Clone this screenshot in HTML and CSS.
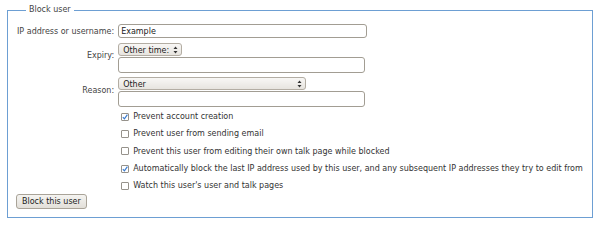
FILE: index.html
```html
<!DOCTYPE html>
<html lang="en">
<head>
    <meta charset="UTF-8">
    <title>Block user</title>
    <link rel="stylesheet" href="styles.css">
</head>
<body>
    <form class="block-form">
        <fieldset class="block-box">
            <legend>Block user</legend>
            <table class="block-table">
                <tr>
                    <td class="label-cell">IP address or username:</td>
                    <td class="input-cell"><input type="text" class="text-input wide" value="Example"></td>
                </tr>
                <tr>
                    <td class="label-cell">Expiry:</td>
                    <td class="input-cell gap-5">
                        <div class="select-box short"><span>Other time:</span><svg class="arrows" width="5" height="8" viewBox="0 0 5 8"><path d="M2.5 0.5L4.5 3H0.5Z M2.5 7.5L4.5 5H0.5Z" fill="#333"/></svg></div>
                        <input type="text" class="text-input">
                    </td>
                </tr>
                <tr>
                    <td class="label-cell">Reason:</td>
                    <td class="input-cell gap-4">
                        <div class="select-box long"><span>Other</span><svg class="arrows" width="5" height="8" viewBox="0 0 5 8"><path d="M2.5 0.5L4.5 3H0.5Z M2.5 7.5L4.5 5H0.5Z" fill="#333"/></svg></div>
                        <input type="text" class="text-input">
                    </td>
                </tr>
                <tr>
                    <td></td>
                    <td class="checks">
                        <label class="check-row"><span class="box"><svg width="6" height="6" viewBox="0 0 6 6"><path d="M0.8 3.2L2.4 4.8L5.4 0.6" fill="none" stroke="#3a7bd0" stroke-width="1.2"/></svg></span>Prevent account creation</label>
                        <label class="check-row"><span class="box"></span>Prevent user from sending email</label>
                        <label class="check-row"><span class="box"></span>Prevent this user from editing their own talk page while blocked</label>
                        <label class="check-row"><span class="box"><svg width="6" height="6" viewBox="0 0 6 6"><path d="M0.8 3.2L2.4 4.8L5.4 0.6" fill="none" stroke="#3a7bd0" stroke-width="1.2"/></svg></span>Automatically block the last IP address used by this user, and any subsequent IP addresses they try to edit from</label>
                        <label class="check-row"><span class="box"></span>Watch this user's user and talk pages</label>
                    </td>
                </tr>
            </table>
            <button type="button" class="submit-btn">Block this user</button>
        </fieldset>
    </form>
</body>
</html>
```

FILE: styles.css
```css
body {
    margin: 0;
    background: #fff;
    font-family: 'DejaVu Sans', sans-serif;
    font-size: 8px;
    color: #333;
}
.block-form {
    padding: 5px 7px 0 7px;
}
.block-box {
    margin: 0;
    border: 1px solid #6d9fd3;
    padding: 9px 8px 8px 9px;
}
.block-box legend {
    padding: 0 3px;
    margin-left: 9px;
    line-height: 10px;
    color: #444;
}
.block-table {
    border-collapse: collapse;
}
.block-table td {
    padding: 0;
}
.label-cell {
    text-align: right;
    vertical-align: middle;
    white-space: nowrap;
    padding-right: 4px !important;
    color: #444;
}
.gap-5 {
    padding-top: 5px !important;
}
.gap-4 {
    padding-top: 4px !important;
}
.text-input {
    display: block;
    width: 247px;
    height: 16px;
    box-sizing: border-box;
    border: 1px solid #a29d93;
    border-radius: 3px;
    font-family: inherit;
    font-size: 8px;
    padding: 0 2px;
    margin: 0;
    color: #222;
}
.text-input.wide {
    width: 249px;
    height: 14px;
}
.select-box {
    display: flex;
    align-items: center;
    justify-content: space-between;
    height: 13px;
    box-sizing: border-box;
    border: 1px solid #b3ada3;
    border-radius: 3px;
    background: linear-gradient(#f8f7f5, #e7e4df);
    padding: 0 3px 0 4px;
    margin-bottom: 1px;
    line-height: 11px;
    color: #222;
}
.select-box span {
    padding-top: 1px;
}
.select-box.short {
    width: 64px;
}
.select-box.long {
    width: 188px;
}
.arrows {
    display: block;
}
.checks {
    padding-top: 1px !important;
}
.check-row {
    display: flex;
    align-items: center;
    height: 17.3px;
    color: #333;
    white-space: nowrap;
}
.box {
    display: flex;
    align-items: center;
    justify-content: center;
    width: 8px;
    height: 8px;
    box-sizing: border-box;
    border: 1px solid #96928b;
    border-radius: 1px;
    margin: 0 4px 0 3px;
    background: #fff;
}
.submit-btn {
    display: block;
    margin: 0 0 0 -1px;
    font-family: inherit;
    font-size: 8px;
    color: #222;
    height: 15px;
    padding: 0 5px;
    border: 1px solid #a9a398;
    border-radius: 3px;
    background: linear-gradient(#f5f4f1, #e2dfd9);
}
```
